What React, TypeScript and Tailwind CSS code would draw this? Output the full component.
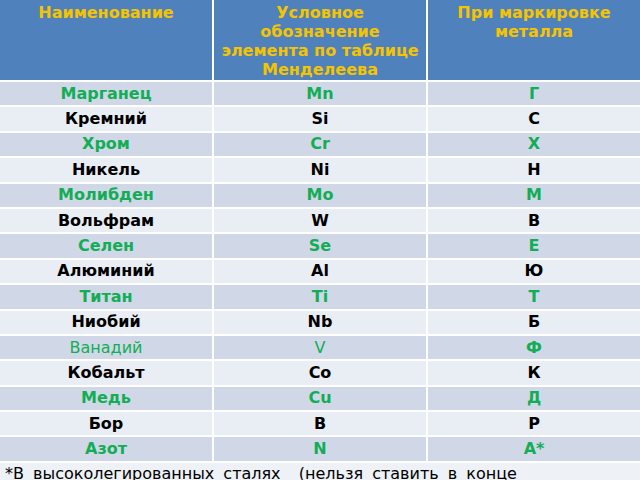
const rows: [string, string, string][] = [
  ["Марганец", "Mn", "Г"],
  ["Кремний", "Si", "С"],
  ["Хром", "Cr", "Х"],
  ["Никель", "Ni", "Н"],
  ["Молибден", "Mo", "М"],
  ["Вольфрам", "W", "В"],
  ["Селен", "Se", "Е"],
  ["Алюминий", "Al", "Ю"],
  ["Титан", "Ti", "Т"],
  ["Ниобий", "Nb", "Б"],
  ["Ванадий", "V", "Ф"],
  ["Кобальт", "Co", "К"],
  ["Медь", "Cu", "Д"],
  ["Бор", "B", "Р"],
  ["Азот", "N", "А*"],
];

export default function App() {
  return (
    <div
      className="w-[640px] h-[480px] overflow-hidden bg-[#eef1f6]"
      style={{ fontFamily: '"DejaVu Sans", sans-serif' }}
    >
      <div className="grid grid-cols-[212px_212px_212px] gap-[2px] bg-white pb-[2px]">
        <div className="h-[80px] bg-[#4f81bd] pt-[3px] text-center text-[16px] font-bold leading-[19px] text-[#f5c400]">
          Наименование
        </div>
        <div className="h-[80px] bg-[#4f81bd] pt-[3px] text-center text-[16px] font-bold leading-[19px] text-[#f5c400]">
          Условное
          <br />
          обозначение
          <br />
          элемента по таблице
          <br />
          Менделеева
        </div>
        <div className="h-[80px] bg-[#4f81bd] pt-[3px] text-center text-[16px] font-bold leading-[19px] text-[#f5c400]">
          При маркировке
          <br />
          металла
        </div>
        {rows.map((r, i) => {
          const odd = i % 2 === 0;
          const bg = odd ? "bg-[#d0d8e8]" : "bg-[#e9edf4]";
          const color = odd ? "text-[#13ad55]" : "text-black";
          const weight = r[0] === "Ванадий" ? "font-normal" : "font-bold";
          return r.map((cell, j) => (
            <div
              key={`${i}-${j}`}
              className={`flex h-[23.4px] items-center justify-center text-[16px] leading-none ${bg} ${color} ${
                j === 2 ? "font-bold" : weight
              }`}
            >
              {cell}
            </div>
          ));
        })}
      </div>
      <p className="pl-[5px] pt-[1px] text-[16px] leading-[19px] text-black [word-spacing:4px] whitespace-nowrap">
        *В высоколегированных сталях&nbsp; (нельзя ставить в конце
      </p>
    </div>
  );
}
